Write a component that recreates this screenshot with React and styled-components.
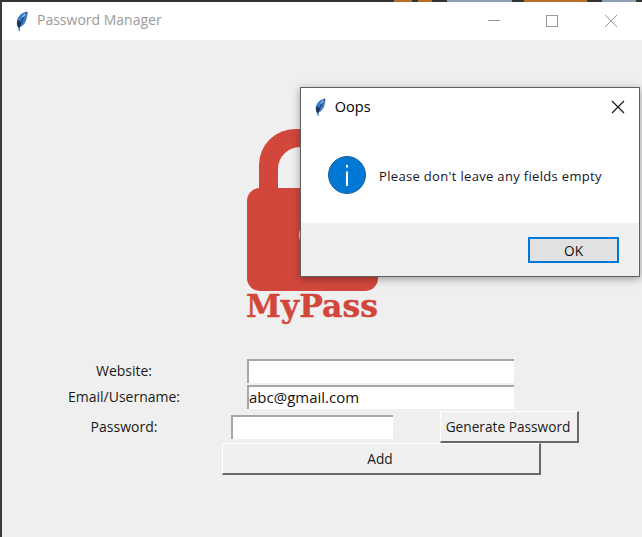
import React from "react";
import styled, { createGlobalStyle } from "styled-components";

const Global = createGlobalStyle`
  html, body { margin: 0; padding: 0; width: 642px; height: 537px; overflow: hidden; background: #efefef; }
  * { box-sizing: border-box; }
`;

const Desktop = styled.div`
  position: relative;
  width: 642px;
  height: 537px;
  display: flex;
  flex-direction: column;
  border-left: 2px solid #3a3a3a;
  background: #efefef;
  overflow: hidden;
  font-family: "Open Sans", "Noto Sans", sans-serif;
`;

const TaskStrip = styled.div`
  height: 2px;
  flex: none;
  background: linear-gradient(
    to right,
    #333 392px,
    #b8702c 392px 410px,
    #333 410px 416px,
    #b8702c 416px 430px,
    #333 430px 445px,
    #8c9fb5 445px 510px,
    #333 510px 522px,
    #b8702c 522px 585px,
    #333 585px 600px,
    #8c9fb5 600px 634px,
    #333 634px
  );
`;

const TitleBar = styled.div`
  height: 38px;
  flex: none;
  background: #fff;
  display: flex;
  align-items: center;
  padding-left: 14px;
`;

const WindowTitle = styled.span`
  margin-left: 9px;
  font-size: 14px;
  color: #9a9a9a;
  line-height: 38px;
  margin-top: -2px;
`;

const Controls = styled.div`
  margin-left: auto;
  margin-top: -2px;
  display: flex;
  align-items: center;
  gap: 42px;
  padding-right: 23px;
`;

const ControlIcon = styled.svg`
  display: block;
  width: 16px;
  height: 16px;
  fill: none;
  stroke: #999;
  stroke-width: 1;
`;

const Body = styled.main`
  flex: 1;
  display: flex;
  flex-direction: column;
`;

const Logo = styled.div`
  margin: 89px 0 0 244px;
  width: 135px;
  display: flex;
  flex-direction: column;
`;

const LockSvg = styled.svg`
  display: block;
  width: 135px;
  height: 163px;
`;

const Brand = styled.div`
  font-family: "DejaVu Serif", "Liberation Serif", serif;
  font-weight: 700;
  font-size: 31.5px;
  line-height: 30px;
  height: 30px;
  color: #d2473c;
  margin-top: -1px;
  white-space: nowrap;
  -webkit-text-stroke: 0.4px #d2473c;
`;

const Form = styled.form`
  margin: 37px 0 0 57px;
  display: flex;
  flex-direction: column;
  font-size: 14px;
  color: #1a1a1a;
`;

const Row = styled.div`
  display: grid;
  grid-template-columns: 130px 1fr;
  align-items: center;
  height: ${(p) => p.$h}px;
`;

const Label = styled.label`
  text-align: center;
  white-space: nowrap;
  margin-top: -1px;
`;

const Field = styled.input`
  display: block;
  margin-left: ${(p) => p.$left}px;
  width: ${(p) => p.$w}px;
  height: 24px;
  padding: 0 0 2px;
  background: #fff;
  border: 0;
  border-top: 2px solid #a6a6a6;
  border-left: 2px solid #a6a6a6;
  font: 15px "Open Sans", "Noto Sans", sans-serif;
  color: #111;
  outline: 0;
`;

const RaisedButton = styled.button`
  display: block;
  width: ${(p) => p.$w}px;
  height: ${(p) => p.$h}px;
  padding: 0 2px 0 0;
  background: #f0f0f0;
  border: 1px solid #fff;
  border-right: 2px solid #696969;
  border-bottom: 2px solid #696969;
  font: 13.7px "Open Sans", "Noto Sans", sans-serif;
  color: #1a1a1a;
`;

const FieldPair = styled.div`
  display: flex;
  align-items: center;
`;

const PairButton = styled(RaisedButton)`
  margin-left: 47px;
`;

const AddButton = styled(RaisedButton)`
  margin-left: 33px;
`;

const Dialog = styled.div`
  position: absolute;
  left: 298px;
  top: 87px;
  width: 340px;
  height: 190px;
  display: flex;
  flex-direction: column;
  background: #fff;
  border: 1px solid #5f5f5f;
  box-shadow: 0 2px 8px rgba(0, 0, 0, 0.35);
`;

const DialogHead = styled.div`
  height: 38px;
  flex: none;
  display: flex;
  align-items: center;
  padding: 0 14px 0 14px;
  font-size: 14.5px;
  color: #000;
`;

const DialogTitle = styled.span`
  margin-left: 9px;
  margin-top: -2px;
`;

const CloseIcon = styled.svg`
  display: block;
  margin-left: auto;
  width: 14px;
  height: 14px;
  fill: none;
  stroke: #111;
  stroke-width: 1.1;
`;

const Message = styled.div`
  height: 97px;
  flex: none;
  display: flex;
  align-items: center;
  padding-left: 27px;
`;

const MessageText = styled.span`
  margin-left: 13px;
  margin-top: 2px;
  font-size: 13px;
  font-weight: 500;
  color: #14141f;
  letter-spacing: 0.33px;
  white-space: nowrap;
`;

const DialogFoot = styled.div`
  flex: 1;
  background: #f0f0f0;
  display: flex;
  justify-content: flex-end;
  align-items: flex-start;
  padding: 14px 20px 0 0;
`;

const OkButton = styled.button`
  width: 91px;
  height: 26px;
  padding: 0;
  background: #e1e1e1;
  border: 2px solid #0078d7;
  font: 13.7px "Open Sans", "Noto Sans", sans-serif;
  color: #111;
`;

const Feather = ({ height = 20 }) => (
  <svg width={height * 0.6} height={height} viewBox="0 0 12 20" style={{ display: "block", flex: "none" }}>
    <path d="M11.500 0.500C8 1 3.500 3 1.500 8C0.500 11 0.500 14 2 16L3 20H4V16C7 15 9.500 12 10.500 8C11.200 5.500 11.800 3 11.500 0.500Z" fill="#3a78c8" />
    <path d="M1.500 9C0.700 11.500 0.800 14 2 16L3.500 16L5 11Z" fill="#1d3a63" />
    <path d="M10.800 1.500C8 5 5 10 3.300 16.500" stroke="#14202f" strokeWidth="0.9" fill="none" />
    <path d="M10.500 2.500L8 3.200L5 7L8.300 5.500Z" fill="#9cc4f0" />
  </svg>
);

const InfoIcon = () => (
  <svg width="38" height="38" viewBox="0 0 38 38" style={{ display: "block", flex: "none" }}>
    <circle cx="19" cy="19" r="18.500" fill="#0078d4" stroke="#1a5f9e" strokeWidth="1" />
    <rect x="18" y="15.500" width="2" height="14.500" fill="#fff" />
    <rect x="18" y="9" width="2" height="2.500" fill="#fff" />
  </svg>
);

export default function App() {
  return (
    <>
      <Global />
      <Desktop>
        <TaskStrip />
        <TitleBar>
          <Feather />
          <WindowTitle>Password Manager</WindowTitle>
          <Controls>
            <ControlIcon viewBox="0 0 16 16"><path d="M1 8.500H13" /></ControlIcon>
            <ControlIcon viewBox="0 0 16 16"><rect x="1.500" y="3.500" width="11" height="11" /></ControlIcon>
            <ControlIcon viewBox="0 0 16 16"><path d="M2 3L14 15M14 3L2 15" /></ControlIcon>
          </Controls>
        </TitleBar>
        <Body>
          <Logo>
            <LockSvg viewBox="0 0 135 163">
              <path d="M13 60V36A36 36 0 0 1 49 0H83A36 36 0 0 1 119 36V60H100V40A22 22 0 0 0 78 18H54A22 22 0 0 0 32 40V60Z" fill="#d2473c" />
              <rect x="1" y="59" width="131" height="103" rx="13" fill="#d2473c" />
              <circle cx="66" cy="106" r="13" fill="#efefef" />
            </LockSvg>
            <Brand>MyPass</Brand>
          </Logo>
          <Form>
            <Row $h={26}>
              <Label>Website:</Label>
              <Field $left={58} $w={267} />
            </Row>
            <Row $h={26}>
              <Label>Email/Username:</Label>
              <Field $left={58} $w={267} defaultValue="abc@gmail.com" />
            </Row>
            <Row $h={33}>
              <Label>Password:</Label>
              <FieldPair>
                <Field $left={42} $w={162} />
                <PairButton type="button" $w={139} $h={32}>Generate Password</PairButton>
              </FieldPair>
            </Row>
            <Row $h={32}>
              <span />
              <AddButton type="button" $w={319} $h={32}>Add</AddButton>
            </Row>
          </Form>
        </Body>
        <Dialog>
          <DialogHead>
            <Feather height={18} />
            <DialogTitle>Oops</DialogTitle>
            <CloseIcon viewBox="0 0 14 14"><path d="M1 1L13 13M13 1L1 13" /></CloseIcon>
          </DialogHead>
          <Message>
            <InfoIcon />
            <MessageText>Please don't leave any fields empty</MessageText>
          </Message>
          <DialogFoot>
            <OkButton type="button">OK</OkButton>
          </DialogFoot>
        </Dialog>
      </Desktop>
    </>
  );
}
